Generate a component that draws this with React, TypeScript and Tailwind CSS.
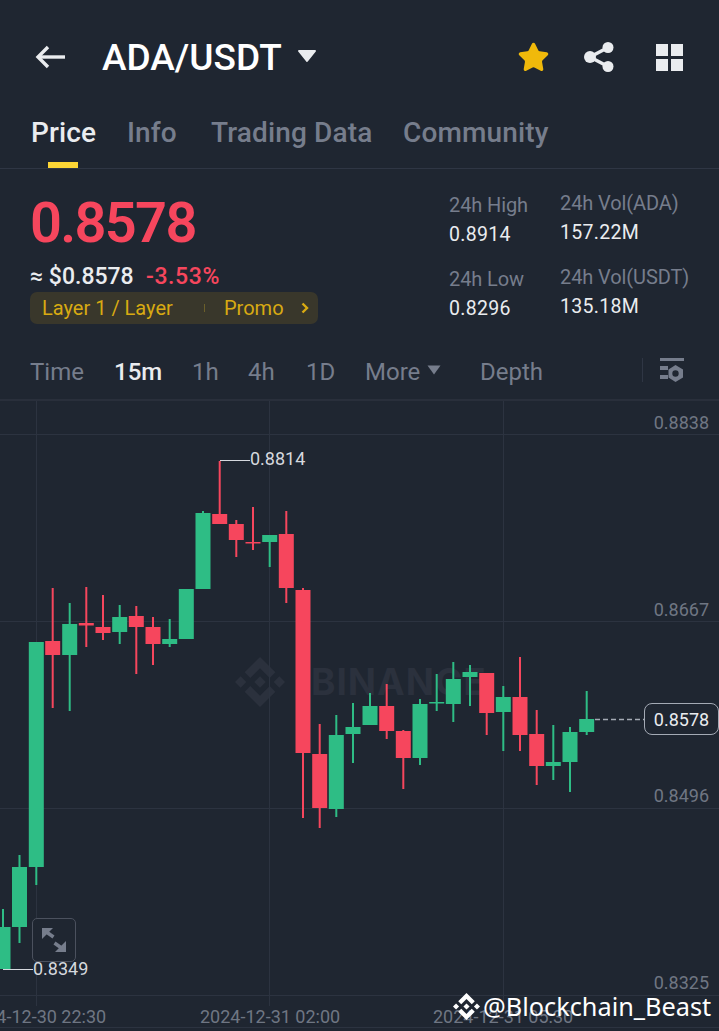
import { Star } from 'lucide-react'

type Candle = [x: number, top: number, bottom: number, wickTop: number, wickBottom: number, up: boolean]

// page coordinates, the svg viewBox starts at y=401
const candles: Candle[] = [
  [3, 927, 969, 909, 969, true],
  [19.5, 867, 927, 855, 943, true],
  [36.3, 642, 867, 642, 885, true],
  [52.7, 641, 655, 588, 708, false],
  [69.7, 624, 655, 603, 711, true],
  [86.3, 623, 625.5, 587, 647, false],
  [103, 627, 633, 595, 640, false],
  [119.7, 617, 632, 605, 644, true],
  [136.3, 616, 627, 606, 674, false],
  [153, 627, 644, 617, 665, false],
  [169.7, 639, 644, 619, 647, true],
  [186.3, 589, 639, 589, 639, true],
  [203, 513, 589, 511, 589, true],
  [219.7, 514, 524, 461, 524, false],
  [236.3, 524, 540, 520, 557, false],
  [253, 542, 543.5, 507, 550, false],
  [269.7, 535, 542, 535, 567, true],
  [286.3, 534, 588, 511, 603, false],
  [303, 590, 753, 588, 818, false],
  [319.7, 754, 808, 724, 828, false],
  [336.3, 735, 809, 715, 817, true],
  [353, 727, 734, 703, 763, true],
  [370, 706, 725, 693, 725, true],
  [386.7, 706, 731, 684, 739, false],
  [403.3, 731, 758, 730, 789, false],
  [420, 704, 758, 699, 765, true],
  [436.7, 702, 703.5, 674, 711, true],
  [453.3, 679, 704, 662, 722, true],
  [470, 672, 677, 665, 706, true],
  [486.7, 673, 713, 673, 735, false],
  [503.3, 697, 712, 686, 751, true],
  [520, 697, 735, 657, 751, false],
  [536.7, 734, 766, 710, 785, false],
  [553.3, 762, 766, 725, 780, true],
  [570, 732, 762, 727, 792, true],
  [586.7, 719, 732, 691, 735, true],
]

function BinanceLogo({ className }: { className: string }) {
  return (
    <svg viewBox="0 0 126.61 126.61" className={className} fill="currentColor">
      <path d="m38.73 53.2 24.59-24.58 24.6 24.6 14.3-14.31L63.32 0 24.43 38.89z" />
      <path d="m0 63.31 14.3-14.31 14.31 14.31-14.31 14.3z" />
      <path d="m38.73 73.41 24.59 24.59 24.6-24.6 14.31 14.29-38.9 38.91-38.91-38.88z" />
      <path d="m98 63.31 14.3-14.31 14.31 14.3-14.31 14.32z" />
      <path d="m77.83 63.3-14.51-14.52-10.73 10.73-1.24 1.23-2.54 2.54 14.51 14.5 14.51-14.47z" />
    </svg>
  )
}

function Header() {
  return (
    <div className="flex h-[114px] items-center pl-[35px] pr-[36px] text-[#eaecef]">
      <svg viewBox="0 0 30 24" className="h-[24px] w-[30px]" fill="none" stroke="currentColor" strokeWidth="3.4">
        <path d="M30 12H3" />
        <path d="M13 2 3 12l10 10" />
      </svg>
      <span className="ml-[37px] text-[37px] font-medium leading-none text-white">ADA/USDT</span>
      <svg viewBox="0 0 20 14" className="mb-[3px] ml-[15px] h-[14px] w-[20px]" fill="currentColor" stroke="currentColor" strokeWidth="2" strokeLinejoin="round">
        <path d="M2 2h16l-8 10z" />
      </svg>
      <Star className="ml-auto h-[33px] w-[33px] text-[#f0b90b]" fill="currentColor" strokeWidth={1.5} />
      <svg viewBox="0 0 30 30" className="ml-[34px] h-[30px] w-[30px]" fill="currentColor">
        <circle cx="24" cy="5.5" r="5.5" />
        <circle cx="24" cy="24.5" r="5.5" />
        <circle cx="6" cy="15" r="6" />
        <path d="M6 15 24 5.5M6 15l18 9.5" stroke="currentColor" strokeWidth="3.5" />
      </svg>
      <div className="ml-[42px] grid h-[27px] w-[27px] grid-cols-2 gap-[3px]">
        <div className="bg-[#eaecef]" />
        <div className="bg-[#eaecef]" />
        <div className="bg-[#eaecef]" />
        <div className="bg-[#eaecef]" />
      </div>
    </div>
  )
}

function Tabs() {
  return (
    <div className="flex h-[55px] border-b border-[#2f3644] pl-[31px] text-[28px] font-medium leading-[38px] tracking-[0.15px] text-[#767d8c]">
      <div className="relative w-[96px] text-[#eaecef]">
        Price
        <div className="absolute bottom-0 left-[17px] h-[6px] w-[30px] bg-[#fcd535]" />
      </div>
      <div className="w-[84px]">Info</div>
      <div className="w-[192px]">Trading Data</div>
      <div>Community</div>
    </div>
  )
}

function Stat({ label, value, gap }: { label: string; value: string; gap: string }) {
  return (
    <div className={gap}>
      <div className="text-[20px] leading-[26px] tracking-[-0.1px] text-[#767d8c]">{label}</div>
      <div className="mt-[4px] text-[19.500px] leading-[26px] tracking-[0.3px] text-[#eaecef]">{value}</div>
    </div>
  )
}

function Summary() {
  return (
    <div className="flex h-[171px] pl-[30px]">
      <div className="w-[419px]">
        <div className="mt-[24px] text-[56px] font-semibold leading-[60px] tracking-[-1.700px] text-[#f6465d]">0.8578</div>
        <div className="mt-[9px] flex text-[23px] font-medium leading-[30px]">
          <span className="w-[116px] text-[#eaecef]">≈ $0.8578</span>
          <span className="tracking-[0.6px] text-[#f6465d]">-3.53%</span>
        </div>
        <div className="flex h-[32px] w-[288px] items-center rounded-[7px] bg-[#39372b] pl-[12px] text-[20px] text-[#d8aa12]">
          <span className="w-[162px]">Layer 1 / Layer</span>
          <div className="h-[8px] w-px bg-[#6b5f2a]" />
          <span className="ml-[19px]">Promo</span>
          <svg viewBox="0 0 8 12" className="ml-[17px] h-[12px] w-[8px]" fill="none" stroke="currentColor" strokeWidth="2.4">
            <path d="m1.5 1.5 4.5 4.5-4.5 4.5" />
          </svg>
        </div>
      </div>
      <div className="w-[111px]">
        <Stat label="24h High" value="0.8914" gap="mt-[23px]" />
        <Stat label="24h Low" value="0.8296" gap="mt-[18px]" />
      </div>
      <div>
        <Stat label="24h Vol(ADA)" value="157.22M" gap="mt-[21px]" />
        <Stat label="24h Vol(USDT)" value="135.18M" gap="mt-[18px]" />
      </div>
    </div>
  )
}

function Toolbar() {
  return (
    <div className="flex h-[61px] items-center border-b-2 border-[#292f3b] pl-[30px] pt-[5px] text-[24px] text-[#767d8c]">
      <span className="w-[84px]">Time</span>
      <span className="w-[78px] font-medium text-[#eaecef]">15m</span>
      <span className="w-[56px]">1h</span>
      <span className="w-[58px]">4h</span>
      <span className="w-[59px]">1D</span>
      <span className="w-[62px]">More</span>
      <svg viewBox="0 0 14 10" className="mb-[5px] h-[10px] w-[14px]" fill="currentColor">
        <path d="M0.5 0.5h13L7 9.5z" />
      </svg>
      <span className="ml-[39px] w-[162px]">Depth</span>
      <div className="mb-[4px] h-[24px] w-px bg-[#2f3644]" />
      <svg viewBox="0 0 24 24" className="mb-[4px] ml-[17px] h-[24px] w-[24px]" fill="currentColor" fillRule="evenodd">
        <path d="M0 0h24v3H0z" />
        <path d="M0 8h8v4H0zM0 17h8v4H0z" />
        <path d="m15.5 7 7.5 4.4v8.2L15.5 24 8.500 19.600v-8.200zm0 5.300a3.200 3.200 0 1 0 0 6.400 3.200 3.200 0 0 0 0-6.400z" />
      </svg>
    </div>
  )
}

function Chart() {
  return (
    <div className="relative h-[630px] overflow-hidden">
      {/* watermark sits under the candles */}
      <div className="absolute left-[235px] top-[256px] flex items-center text-[#2b313d]">
        <BinanceLogo className="h-[50px] w-[50px]" />
        <span className="ml-[26px] font-['Inter',sans-serif] text-[37px] font-bold leading-[50px] tracking-[1px]">BINANCE</span>
      </div>

      <svg viewBox="0 401 719 630" className="absolute inset-0 h-[630px] w-[719px]">
        <g stroke="#2c3340" strokeWidth="1">
          <path d="M0 434.500H719M0 621.500H719M0 808.500H719M0 995.500H719" />
          <path d="M36.500 401V1006M269.500 401V1006M503.500 401V1006" />
          <path d="M0 1027.500H719" />
        </g>
        {candles.map(([x, top, bottom, wickTop, wickBottom, up]) => (
          <g key={x} fill={up ? '#2ebd85' : '#f6465d'}>
            <rect x={x - 1} y={wickTop} width="2" height={wickBottom - wickTop} />
            <rect x={x - 7.5} y={top} width="15" height={bottom - top} />
          </g>
        ))}
        <path d="M220 460.500H250M3 969.500H33" stroke="#d5d8de" strokeWidth="1.2" />
        <path d="M595 719.500H644" stroke="#a4aab5" strokeWidth="1.5" strokeDasharray="5 3" />
      </svg>

      <div className="absolute right-[10px] top-[12px] text-[18px] leading-[20px] text-[#6f7683]">0.8838</div>
      <div className="absolute right-[10px] top-[199px] text-[18px] leading-[20px] text-[#6f7683]">0.8667</div>
      <div className="absolute right-[10px] top-[385px] text-[18px] leading-[20px] text-[#6f7683]">0.8496</div>
      <div className="absolute right-[10px] top-[572px] text-[18px] leading-[20px] text-[#6f7683]">0.8325</div>

      <div className="absolute left-[250px] top-[48px] text-[18px] leading-[20px] text-[#d5d8de]">0.8814</div>
      <div className="absolute left-[33px] top-[558px] text-[18px] leading-[20px] text-[#d5d8de]">0.8349</div>

      <div className="absolute left-[644px] top-[302px] flex h-[32px] w-[75px] items-center justify-center rounded-[8px] border-[1.5px] border-[#a4aab5] bg-[#1f2631] text-[18px] text-[#eaecef]">
        0.8578
      </div>

      <div className="absolute left-[32px] top-[517px] flex h-[44px] w-[44px] items-center justify-center rounded-[5px] border border-[#4b515e] bg-[#1f2631]">
        <svg viewBox="0 0 26 26" className="h-[26px] w-[26px]" fill="#767d8c" stroke="#767d8c">
          <path d="M1 1h11L1 12z" strokeWidth="0" />
          <path d="M4 4l8.500 6" strokeWidth="3.500" />
          <path d="M25 25H14l11-11z" strokeWidth="0" />
          <path d="M22 22l-8.500-6" strokeWidth="3.500" />
        </svg>
      </div>

      <div className="absolute left-[-34px] top-[606px] text-[18px] leading-[20px] text-[#6f7683]">2024-12-30 22:30</div>
      <div className="absolute left-[200px] top-[606px] text-[18px] leading-[20px] text-[#6f7683]">2024-12-31 02:00</div>
      <div className="absolute left-[433px] top-[606px] text-[18px] leading-[20px] text-[#6f7683]">2024-12-31 05:30</div>

      {/* repost credit stamped over the bottom right */}
      <div className="absolute left-[453px] top-[587px] flex items-center text-white">
        <BinanceLogo className="h-[27px] w-[27px]" />
        <span className="ml-[3px] font-['Noto_Sans',sans-serif] text-[25.300px] leading-[36px]">@Blockchain_Beast</span>
      </div>
    </div>
  )
}

export default function App() {
  return (
    <div className="h-[1031px] w-[719px] overflow-hidden bg-[#1f2631] font-['Roboto',sans-serif]">
      <Header />
      <Tabs />
      <Summary />
      <Toolbar />
      <Chart />
    </div>
  )
}
